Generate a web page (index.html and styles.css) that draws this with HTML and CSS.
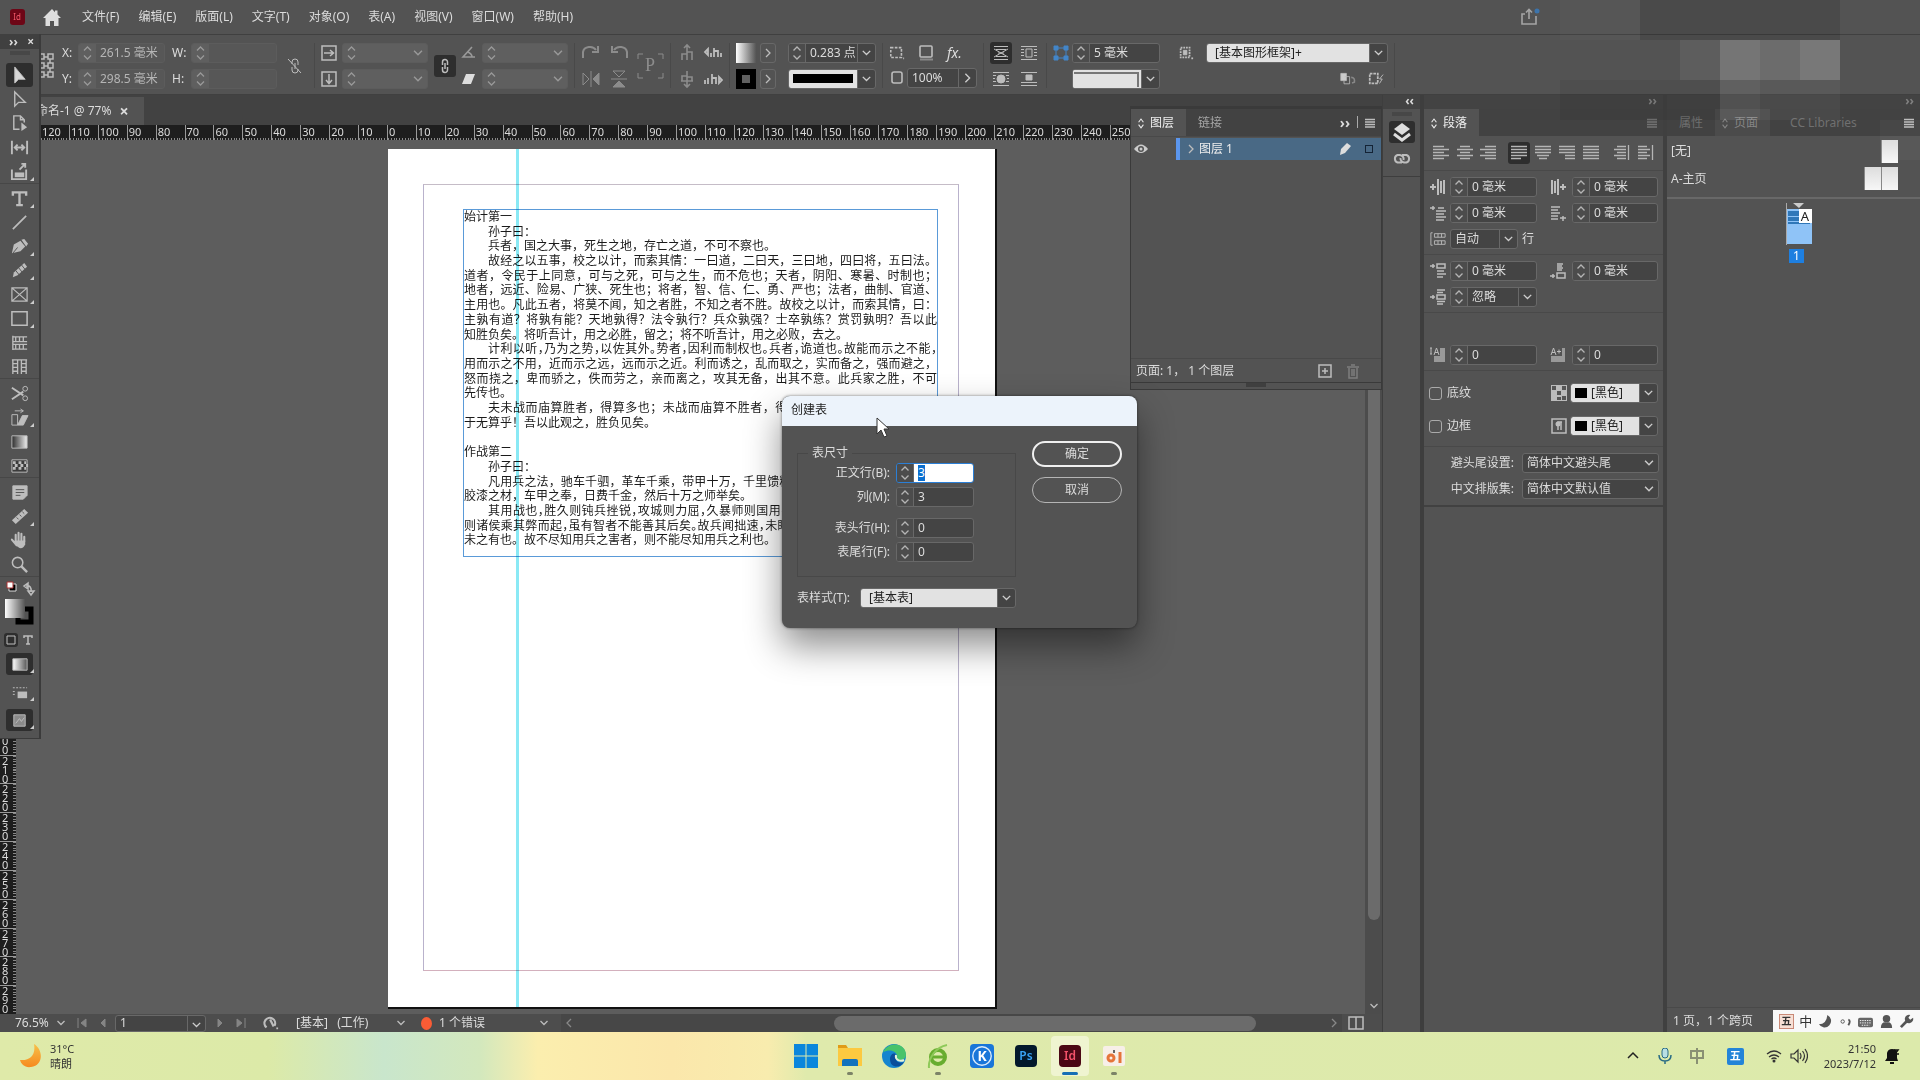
FILE: index.html
```html
<!DOCTYPE html>
<html lang="zh-CN">

<head>
  <meta charset="UTF-8">
  <meta name="viewport" content="width=device-width, initial-scale=1.0">
  <title>未命名-1 @ 77%</title>
  <link rel="stylesheet" href="styles.css">
</head>

<body>
  <!-- shared icons -->
  <svg class="sprite" aria-hidden="true">
    <symbol id="spin" viewBox="0 0 16 18"><path d="M4.500 6.500L8 3l3.500 3.500M4.500 11.500L8 15l3.500-3.500" /></symbol>
    <symbol id="down" viewBox="0 0 16 16"><path d="M4.500 6L8 9.500 11.500 6" /></symbol>
    <symbol id="right" viewBox="0 0 16 16"><path d="M6 4l4 4-4 4" /></symbol>
    <symbol id="menu" viewBox="0 0 16 16"><path d="M3 4.500h10M3 7h10M3 9.500h10M3 12h10" /></symbol>
    <symbol id="updown" viewBox="0 0 10 14"><path d="M2 6l3-4 3 4M2 9l3 4 3-4" /></symbol>
    <symbol id="bars" viewBox="0 0 16 16"><path d="M1 1.500h14M1 4.500h14M1 7.500h14M1 10.500h14M1 13.500h14" /></symbol>
    <symbol id="al" viewBox="0 0 16 16"><path d="M0 1.500h11M0 4.500h16M0 7.500h11M0 10.500h16M0 13.500h11" /></symbol>
    <symbol id="ac" viewBox="0 0 16 16"><path d="M3 1.500h10M0 4.500h16M3 7.500h10M0 10.500h16M3 13.500h10" /></symbol>
    <symbol id="ar" viewBox="0 0 16 16"><path d="M5 1.500h11M0 4.500h16M5 7.500h11M0 10.500h16M5 13.500h11" /></symbol>
    <symbol id="jl" viewBox="0 0 16 16"><path d="M0 1.500h16M0 4.500h16M0 7.500h16M0 10.500h16M0 13.500h10" /></symbol>
    <symbol id="jc" viewBox="0 0 16 16"><path d="M0 1.500h16M0 4.500h16M0 7.500h16M2 10.500h12M4 13.500h8" /></symbol>
    <symbol id="jr" viewBox="0 0 16 16"><path d="M0 1.500h16M0 4.500h16M0 7.500h16M6 10.500h10M6 13.500h10" /></symbol>
    <symbol id="ja" viewBox="0 0 16 16"><path d="M0 1.500h16M0 4.500h16M0 7.500h16M0 10.500h16M0 13.500h16" /></symbol>
    <symbol id="sp1" viewBox="0 0 16 16"><path d="M3 1.500h9M0 4.500h12M3 7.500h9M0 10.500h12M3 13.500h9M14.500 0v15" /></symbol>
    <symbol id="sp2" viewBox="0 0 16 16"><path d="M0 1.500h9M0 4.500h12M0 7.500h9M0 10.500h12M0 13.500h9M14.500 0v15" /></symbol>
  </svg>

  <header class="menubar">
    <svg class="app-logo" viewBox="0 0 15 16"><rect width="15" height="16" rx="3" fill="#6d0616" /><text x="7" y="11" text-anchor="middle" font-size="8" fill="#f55a6a">Id</text></svg>
    <svg class="home" viewBox="0 0 18 17"><path d="M9 0L0 9h2.500v8H7v-5h4v5h4.500V9H18l-3.500-3.500V1.500H12v1.700z" fill="#dedede" /></svg>
    <nav>
      <a href="#">文件(F)</a><a href="#">编辑(E)</a><a href="#">版面(L)</a><a href="#">文字(T)</a><a href="#">对象(O)</a><a href="#">表(A)</a><a href="#">视图(V)</a><a href="#">窗口(W)</a><a href="#">帮助(H)</a>
    </nav>
    <svg class="share" viewBox="0 0 20 18"><path d="M5 6H2v10h14V8M9 11V2M6 4.500L9 1.500l3 3" fill="none" stroke="#a5a5a5" stroke-width="1.600" /><circle cx="17" cy="3" r="2.500" fill="#3c74ac" /></svg>
  </header>

  <section class="controlbar">
    <div class="group first">
      <svg class="refgrid" viewBox="0 0 14 26"><g fill="none" stroke="#bbb" stroke-width="1.500"><path d="M0 1h4v5H0M8 1h5v5H8zM0 10h4v5H0M8 10h5v5H8zM0 19h4v5H0M8 19h5v5H8zM4 4h4M4 13h4M4 22h4M10 6v4M10 15v4" /></g></svg>
      <div class="xywh">
        <label for="fx">X:</label><span class="num off"><svg class="spin"><use href="#spin" /></svg><input id="fx" value="261.5 毫米"></span>
        <label for="fw">W:</label><span class="num off"><svg class="spin"><use href="#spin" /></svg><input id="fw"></span>
        <label for="fy">Y:</label><span class="num off"><svg class="spin"><use href="#spin" /></svg><input id="fy" value="298.5 毫米"></span>
        <label for="fh">H:</label><span class="num off"><svg class="spin"><use href="#spin" /></svg><input id="fh"></span>
      </div>
      <svg class="ico unlink" viewBox="0 0 16 16"><path d="M1 1l13 14M5 6V4a3 3 0 0 1 6 0v3M5 9v3a3 3 0 0 0 6 0v-1M8 5v6" /></svg>
    </div>

    <div class="group scale">
      <div class="pair">
        <svg class="ico" viewBox="0 0 16 16"><path d="M1 1h14v14H1zM3 8h9M9 5l3.500 3L9 11" stroke-width="1.500" /></svg>
        <span class="num off"><svg class="spin"><use href="#spin" /></svg><input aria-label="X 缩放"><svg class="caret"><use href="#down" /></svg></span>
        <svg class="ico" viewBox="0 0 16 16"><path d="M1 1h14v14H1zM8 3v9M5 9l3 3.500L11 9" stroke-width="1.500" /></svg>
        <span class="num off"><svg class="spin"><use href="#spin" /></svg><input aria-label="Y 缩放"><svg class="caret"><use href="#down" /></svg></span>
      </div>
      <button class="chain on" aria-label="约束缩放"><svg class="ico" viewBox="0 0 16 16"><path d="M5.500 7V4a2.500 2.500 0 0 1 5 0v3M5.500 9v3a2.500 2.500 0 0 0 5 0V9M8 5v6" stroke-width="1.500" /></svg></button>
      <div class="pair">
        <svg class="ico" viewBox="0 0 16 16"><path d="M11 2L2 12h12M7 7q4 2 4 5" stroke="#999" stroke-width="1.600" /></svg>
        <span class="num off"><svg class="spin"><use href="#spin" /></svg><input aria-label="旋转角度"><svg class="caret"><use href="#down" /></svg></span>
        <svg class="ico" viewBox="0 0 16 16"><path d="M5 3h9l-4 10H1z" fill="#ddd" stroke="none" /></svg>
        <span class="num off"><svg class="spin"><use href="#spin" /></svg><input aria-label="切变角度"><svg class="caret"><use href="#down" /></svg></span>
      </div>
    </div>

    <div class="group rotate dim">
      <div class="icons">
        <svg class="ico" viewBox="0 0 20 20"><path d="M2 15V9a7 6 0 0 1 13-2M17 3v6h-6" stroke-width="2" /></svg>
        <svg class="ico" viewBox="0 0 20 20"><path d="M18 15V9A7 6 0 0 0 5 7M3 3v6h6" stroke-width="2" /></svg>
        <svg class="ico" viewBox="0 0 20 20"><path d="M2 4v12l6-6zM10 2v16" /><path d="M18 4v12l-6-6z" fill="currentColor" /></svg>
        <svg class="ico" viewBox="0 0 20 20"><path d="M4 2h12l-6 6zM2 10h16" /><path d="M4 18h12l-6-6z" fill="currentColor" /></svg>
      </div>
      <svg class="pbox" viewBox="0 0 27 26"><path d="M1 6V1h5M21 1h5v5M1 20v5h5M21 25h5v-5" fill="none" stroke="currentColor" /><text x="13" y="18" text-anchor="middle" font-size="18" font-family="Liberation Serif, serif" fill="currentColor">P</text></svg>
    </div>

    <div class="group picks">
      <div class="icons">
        <svg class="ico dim" viewBox="0 0 20 20"><path d="M10 3v14M5 17v-6h5M15 17v-8h-5M7 5l3-3 3 3" stroke-width="1.600" /></svg>
        <svg class="ico" viewBox="0 0 20 20"><path d="M8 14v-4M11 14V5M11 8h4v6M18 14v-4M5 6L2 9l3 3z" stroke-width="1.800" /></svg>
        <svg class="ico dim" viewBox="0 0 20 20"><path d="M10 2v15M5 12V7h5M15 12V8h-5M4 12h12M7 15l3 3 3-3" stroke-width="1.600" /></svg>
        <svg class="ico" viewBox="0 0 20 20"><path d="M2 15v-4M5 15V9M9 15V5M9 9h4v6M16 8l3 3-3 3z" stroke-width="1.800" /></svg>
      </div>
    </div>

    <div class="group paint">
      <div class="swatches">
        <span class="fill"></span><button class="arrow" aria-label="填色"><svg class="ico"><use href="#right" /></svg></button>
        <span class="line"></span><button class="arrow" aria-label="描边"><svg class="ico"><use href="#right" /></svg></button>
      </div>
      <div class="stack">
        <span class="num"><svg class="spin"><use href="#spin" /></svg><input aria-label="描边粗细" value="0.283 点"><svg class="caret"><use href="#down" /></svg></span>
        <button class="style-pick" aria-label="描边类型"><span class="white"><i></i></span><svg class="caret"><use href="#down" /></svg></button>
      </div>
    </div>

    <div class="group effects">
      <div class="fxrow">
        <svg class="ico" viewBox="0 0 18 16"><path d="M2 2h12v11H2z" stroke-dasharray="3 1.500" stroke-width="1.800" /><path d="M16 14h1" stroke-width="2" /></svg>
        <svg class="ico" viewBox="0 0 16 16"><rect x="2" y="1" width="12" height="11" rx="1" stroke-width="1.600" /><path d="M2 14.500h13" stroke="#888" stroke-width="2" /></svg>
        <em>fx.</em>
      </div>
      <div class="oprow">
        <svg class="ico" viewBox="0 0 16 16"><rect x="3" y="2" width="10" height="11" rx="2" stroke-width="1.600" /></svg>
        <span class="num"><input aria-label="不透明度" value="100%"><svg class="caret"><use href="#right" /></svg></span>
      </div>
    </div>

    <div class="group wrap">
      <button class="on" aria-label="无文本绕排"><svg class="ico" viewBox="0 0 16 16"><path d="M1 1.500h14M1 14.500h14M3 4.500h10M5 8h6M3 11.500h10M1 4l14 8M15 4L1 12" /></svg></button>
      <button aria-label="沿定界框绕排"><svg class="ico" viewBox="0 0 16 16"><path d="M0 1.500h16M0 14.500h16M0 4.500h3M0 7.500h3M0 10.500h3M13 4.500h3M13 7.500h3M13 10.500h3M5 4h6v8H5z" /></svg></button>
      <button aria-label="沿对象形状绕排"><svg class="ico" viewBox="0 0 16 16"><path d="M0 1.500h16M0 14.500h16M0 4.500h3M0 7.500h2M0 10.500h3M13 4.500h3M14 7.500h2M13 10.500h3" /><circle cx="8" cy="8" r="4" fill="currentColor" /></svg></button>
      <button aria-label="上下型绕排"><svg class="ico" viewBox="0 0 16 16"><path d="M0 1.500h16M0 11.500h16M0 14.500h16" /><path d="M5 4h6v5H5z" fill="currentColor" /></svg></button>
    </div>

    <div class="group corner">
      <svg class="ico blue" viewBox="0 0 16 16"><path d="M3 3h10v10H3z" /><path d="M1 1h4v4H1zM11 1h4v4h-4zM1 11h4v4H1zM11 11h4v4h-4z" fill="#4385c8" /></svg>
      <div class="stack">
        <span class="num"><svg class="spin"><use href="#spin" /></svg><input aria-label="角大小" value="5 毫米"></span>
        <button class="style-pick" aria-label="角形状"><span class="white edge"></span><svg class="caret"><use href="#down" /></svg></button>
      </div>
    </div>

    <div class="group objstyle">
      <div class="objrow">
        <svg class="ico" viewBox="0 0 18 16"><path d="M3 2h10v11H3z" stroke-width="2" stroke-dasharray="2 1" /><path d="M6 5h4v5H6z" fill="currentColor" /><path d="M15 14h2" stroke-width="2" /></svg>
        <span class="combo light"><select aria-label="对象样式"><option>[基本图形框架]+</option></select><svg class="caret"><use href="#down" /></svg></span>
      </div>
      <div class="objrow end">
        <svg class="ico" viewBox="0 0 20 16"><path d="M1 1h7v9H1z" fill="#ccc" /><path d="M6 5h6v9H5v-4" /><path d="M14 6q5 0 4 6l-3 1" stroke="#888" stroke-width="2" /></svg>
        <svg class="ico" viewBox="0 0 18 16"><path d="M2 2h9v11H2z" stroke-width="2" stroke-dasharray="3 1" /><path d="M17 3l-4 5h3l-3 5" /></svg>
      </div>
    </div>
  </section>

  <main class="workspace">
    <section class="docarea">
      <div class="doctabs"><div class="doctab">未命名-1 @ 77% <button aria-label="关闭文档">×</button></div></div>
      <div class="hruler" id="hruler"></div>
      <div class="canvas">
        <div class="vruler" id="vruler"></div>
        <div class="pasteboard">
          <article class="page">
            <div class="margins"></div>
            <div class="frame">
              <p>始计第一</p>
              <p class="in">孙子曰：</p>
              <p class="in">兵者，国之大事，死生之地，存亡之道，不可不察也。</p>
              <p class="in full">故经之以五事，校之以计，而索其情：一曰道，二曰天，三曰地，四曰将，五曰法。</p>
              <p class="full">道者，令民于上同意，可与之死，可与之生，而不危也；天者，阴阳、寒暑、时制也；</p>
              <p class="full">地者，远近、险易、广狭、死生也；将者，智、信、仁、勇、严也；法者，曲制、官道、</p>
              <p class="full">主用也。凡此五者，将莫不闻，知之者胜，不知之者不胜。故校之以计，而索其情，曰：</p>
              <p class="full">主孰有道？将孰有能？天地孰得？法令孰行？兵众孰强？士卒孰练？赏罚孰明？吾以此</p>
              <p>知胜负矣。将听吾计，用之必胜，留之；将不听吾计，用之必败，去之。</p>
              <p class="in full tight">计利以听，乃为之势，以佐其外。势者，因利而制权也。兵者，诡道也。故能而示之不能，</p>
              <p class="full">用而示之不用，近而示之远，远而示之近。利而诱之，乱而取之，实而备之，强而避之，</p>
              <p class="full">怒而挠之，卑而骄之，佚而劳之，亲而离之，攻其无备，出其不意。此兵家之胜，不可</p>
              <p>先传也。</p>
              <p class="in full">夫未战而庙算胜者，得算多也；未战而庙算不胜者，得算少也。多算胜少算不胜，</p>
              <p>于无算乎！吾以此观之，胜负见矣。</p>
              <p></p>
              <p>作战第二</p>
              <p class="in">孙子曰：</p>
              <p class="in full">凡用兵之法，驰车千驷，革车千乘，带甲十万，千里馈粮，则内外之费，宾客之用，</p>
              <p>胶漆之材，车甲之奉，日费千金，然后十万之师举矣。</p>
              <p class="in full tight">其用战也，胜久则钝兵挫锐，攻城则力屈，久暴师则国用不足。夫钝兵挫锐，屈力殚货，</p>
              <p class="full tight">则诸侯乘其弊而起，虽有智者不能善其后矣。故兵闻拙速，未睹巧之久也。夫兵久而国利者，</p>
              <p>未之有也。故不尽知用兵之害者，则不能尽知用兵之利也。</p>
            </div>
            <div class="guide"></div>
          </article>
        </div>
        <div class="vscroll"><span></span><svg class="ico"><use href="#down" /></svg></div>
      </div>
      <footer class="status">
        <span class="zoom">76.5%</span><svg class="ico"><use href="#down" /></svg>
        <svg class="ico nav" viewBox="0 0 16 16"><path d="M4 3v10" /><path d="M12 4v8L7 8z" fill="currentColor" /></svg>
        <svg class="ico nav" viewBox="0 0 16 16"><path d="M10 4v8L6 8z" fill="currentColor" /></svg>
        <span class="num pageno"><input aria-label="页码" value="1"><svg class="caret"><use href="#down" /></svg></span>
        <svg class="ico nav" viewBox="0 0 16 16"><path d="M6 4v8l4-4z" fill="currentColor" /></svg>
        <svg class="ico nav" viewBox="0 0 16 16"><path d="M4 4v8l5-4z" fill="currentColor" /><path d="M12 3v10" /></svg>
        <svg class="ico preflight" viewBox="0 0 18 16"><path d="M4 13A6 6 0 1 1 13 11M8 4l4 8" stroke-width="2.500" /><path d="M15 14h2" stroke-width="2" /></svg>
        <span class="profile">[基本]&nbsp;&nbsp; (工作)</span><svg class="ico"><use href="#down" /></svg>
        <i class="reddot"></i><span class="errors">1 个错误</span><svg class="ico"><use href="#down" /></svg>
        <div class="hscroll"><svg class="ico"><use href="#right" /></svg><span></span><svg class="ico"><use href="#right" /></svg></div>
        <svg class="ico split" viewBox="0 0 16 16"><path d="M1 2h14v12H1zM8 2v12" stroke-width="1.500" /></svg>
      </footer>

      <!-- floating layers panel -->
      <aside class="layers">
        <div class="tabs"><button class="tab cur"><svg><use href="#updown" /></svg>图层</button><button class="tab">链接</button><span class="more">››</span><i class="bar"></i><svg class="ico"><use href="#menu" /></svg></div>
        <div class="layer">
          <svg class="ico eye" viewBox="0 0 16 16"><path d="M1 8q7-9 14 0-7 8-14 0z" fill="#ccc" stroke="none" /><circle cx="8" cy="8" r="3" fill="#535353" stroke="none" /><circle cx="8" cy="8" r="1.500" fill="#ccc" stroke="none" /></svg>
          <div class="layer-name"><svg class="ico"><use href="#right" /></svg>图层 1<svg class="ico pen" viewBox="0 0 16 16"><path d="M3 14l1-6 6-6 4 3-6 7z" fill="#ddd" stroke="none" /></svg><i></i></div>
        </div>
        <div class="layer-foot">页面: 1， 1 个图层
          <svg class="ico" viewBox="0 0 16 16"><path d="M2 2h12v12H2zM8 5v6M5 8h6" stroke-width="1.500" /></svg>
          <svg class="ico faint" viewBox="0 0 16 16"><path d="M2 4h12M6 2h4M4 5v10h8V5M7 6v7M9 6v7" stroke-width="1.500" /></svg>
        </div>
        <div class="grip"></div>
      </aside>
    </section>

    <section class="dock">
      <div class="strip">‹‹</div>
      <div class="dock-body">
        <i></i>
        <button class="on" aria-label="图层"><svg viewBox="0 0 20 20"><path d="M10 1l8 6-8 6-8-6z" fill="#ddd" /><path d="M2 12l8 6 8-6" fill="none" stroke="#ddd" stroke-width="3" /></svg></button>
        <button aria-label="链接"><svg viewBox="0 0 20 20"><path d="M10 13.500H5.500a4 4 0 0 1 0-7.500H8a4 4 0 0 1 3.500 5M10 6h4.500a4 4 0 0 1 0 7.500H12A4 4 0 0 1 8.500 9" fill="none" stroke="#bdbdbd" stroke-width="2" /></svg></button>
      </div>
    </section>

    <section class="para">
      <div class="strip"><span class="faint">››</span></div>
      <div class="tabs"><button class="tab cur"><svg><use href="#updown" /></svg>段落</button><svg class="ico menu faint"><use href="#menu" /></svg></div>
      <div class="aligns">
        <button aria-label="左对齐"><svg><use href="#al" /></svg></button><button aria-label="居中"><svg><use href="#ac" /></svg></button><button aria-label="右对齐"><svg><use href="#ar" /></svg></button>
        <button class="on" aria-label="双齐末行齐左"><svg><use href="#jl" /></svg></button><button aria-label="双齐末行居中"><svg><use href="#jc" /></svg></button><button aria-label="双齐末行齐右"><svg><use href="#jr" /></svg></button><button aria-label="全部强制双齐"><svg><use href="#ja" /></svg></button>
        <button class="gap" aria-label="朝向书脊"><svg><use href="#sp1" /></svg></button><button aria-label="背向书脊"><svg><use href="#sp2" /></svg></button>
      </div>
      <div class="fields">
        <svg class="ico" viewBox="0 0 16 16"><path d="M0 8h6M3 5v6M8 0v16M11 2v12M14 1v14" stroke-width="2" /></svg>
        <span class="num"><svg class="spin"><use href="#spin" /></svg><input aria-label="左缩进" value="0 毫米"></span>
        <svg class="ico" viewBox="0 0 16 16"><path d="M10 8h6M13 5v6M8 0v16M5 2v12M2 1v14" stroke-width="2" /></svg>
        <span class="num"><svg class="spin"><use href="#spin" /></svg><input aria-label="右缩进" value="0 毫米"></span>
        <svg class="ico" viewBox="0 0 16 16"><path d="M0 3h5M3 1v4M8 3h6M6 6h10M6 9h8M6 12h10M6 15h8" stroke-width="1.500" /></svg>
        <span class="num"><svg class="spin"><use href="#spin" /></svg><input aria-label="首行左缩进" value="0 毫米"></span>
        <svg class="ico" viewBox="0 0 16 16"><path d="M1 2h9M1 5h7M1 8h9M1 11h7M1 14h7M10 13h6M13 11v5" stroke-width="1.500" /></svg>
        <span class="num"><svg class="spin"><use href="#spin" /></svg><input aria-label="末行右缩进" value="0 毫米"></span>
        <svg class="ico" viewBox="0 0 18 16"><path d="M3 1H1v14h2M5 2h12v4H5zM5 10h12v4H5zM9 2v4M13 2v4M9 10v4M13 10v4" /></svg>
        <div class="auto"><span class="combo"><select id="gridrows"><option>自动</option></select><svg class="caret"><use href="#down" /></svg></span><label for="gridrows">行</label></div>
      </div>
      <div class="fields">
        <svg class="ico" viewBox="0 0 16 16"><path d="M0 3h5M3 1v4M7 1h8v4H7zM7 8h7M7 11h9M7 14h6" stroke-width="1.500" /></svg>
        <span class="num"><svg class="spin"><use href="#spin" /></svg><input aria-label="段前间距" value="0 毫米"></span>
        <svg class="ico" viewBox="0 0 16 16"><path d="M7 1h6M7 3h5M7 5h6M7 7h5M7 10h8v5H7zM0 13h5M3 11v4" stroke-width="1.500" /></svg>
        <span class="num"><svg class="spin"><use href="#spin" /></svg><input aria-label="段后间距" value="0 毫米"></span>
        <svg class="ico" viewBox="0 0 16 16"><path d="M0 8h5M3 6v4M7 1h8M7 3.500h6M7 6h8v4H7zM7 12.500h8M7 15h6" stroke-width="1.500" /></svg>
        <span class="num"><svg class="spin"><use href="#spin" /></svg><input aria-label="段落间距" value="忽略"><svg class="caret"><use href="#down" /></svg></span>
      </div>
      <div class="fields drop">
        <svg class="ico" viewBox="0 0 16 16"><path d="M1 1v6M0 1h2M0 7h2" /><path d="M10 1h5v14H4V9h6z" fill="#999" stroke="none" /><path d="M4 8l2.500-7L9 8M5 5.500h3" /></svg>
        <span class="num"><svg class="spin"><use href="#spin" /></svg><input aria-label="首字下沉行数" value="0"></span>
        <svg class="ico" viewBox="0 0 16 16"><path d="M12 1h3v14H1V9h11z" fill="#999" stroke="none" /><path d="M1 8l2.500-7L6 8M2 5.500h3M7 4.500h4M9 2.500v4" /></svg>
        <span class="num"><svg class="spin"><use href="#spin" /></svg><input aria-label="首字下沉字数" value="0"></span>
      </div>
      <div class="shade">
        <label><input type="checkbox">底纹</label>
        <svg class="ico" viewBox="0 0 16 16"><path d="M0 0h16v16H0z" fill="#bbb" stroke="none" /><path d="M1 1h4v4H1zM6 6h4v4H6zM11 1h4v4h-4zM11 11h4v4h-4zM6 12h4v3H6z" fill="#555" stroke="none" /></svg>
        <span class="combo light"><i></i><select aria-label="底纹颜色"><option>[黑色]</option></select><svg class="caret"><use href="#down" /></svg></span>
        <label><input type="checkbox">边框</label>
        <svg class="ico" viewBox="0 0 16 16"><path d="M1 1h14v14H1z" stroke-width="1.500" /><path d="M7 12V4h4M10 4v8" stroke-width="1.500" /><circle cx="7" cy="6" r="2.500" fill="currentColor" stroke="none" /></svg>
        <span class="combo light"><i></i><select aria-label="边框颜色"><option>[黑色]</option></select><svg class="caret"><use href="#down" /></svg></span>
      </div>
      <div class="sets">
        <label for="kinsoku">避头尾设置:</label><span class="combo"><select id="kinsoku"><option>简体中文避头尾</option></select><svg class="caret"><use href="#down" /></svg></span>
        <label for="mojikumi">中文排版集:</label><span class="combo"><select id="mojikumi"><option>简体中文默认值</option></select><svg class="caret"><use href="#down" /></svg></span>
      </div>
    </section>

    <section class="pages">
      <div class="strip"><span class="faint">››</span></div>
      <div class="tabs"><button class="tab">属性</button><button class="tab cur"><svg><use href="#updown" /></svg>页面</button><button class="tab">CC Libraries</button><svg class="ico menu"><use href="#menu" /></svg></div>
      <div class="master"><span>[无]</span><i class="sheet"></i></div>
      <div class="master second"><span>A-主页</span><i class="sheet"></i><i class="sheet"></i></div>
      <div class="spreads">
        <svg viewBox="0 0 26 42"><path d="M7 0h11l-5 5z" fill="#ccc" /><path d="M.500 0v42" stroke="#aaa" /><rect x="1" y="6" width="25" height="35" fill="#8fc3f7" /><path d="M2 8h11v5H2zM2 14h11v4H2zM2 19h22v2H2z" fill="#2f77b9" /><path d="M13 6h13v14H13z" fill="#fff" /><text x="19" y="18" text-anchor="middle" font-size="13" fill="#222">A</text></svg>
        <b>1</b>
      </div>
      <div class="pages-foot">1 页，1 个跨页</div>
      <div class="ime">
        <svg viewBox="0 0 16 16"><rect x=".500" y=".500" width="15" height="15" fill="#f7e0d6" stroke="#c78470" /><text x="8" y="12" text-anchor="middle" font-size="11" font-weight="700" fill="#333">五</text></svg>
        <span>中</span>
        <svg viewBox="0 0 16 16"><path d="M10 1a7 7 0 1 1-9 10q8 0 9-10z" fill="#555" /></svg>
        <svg viewBox="0 0 16 16"><circle cx="5" cy="8" r="1.800" fill="none" stroke="#555" /><path d="M11 6q3 1 0 6" fill="none" stroke="#555" stroke-width="2" /></svg>
        <svg viewBox="0 0 16 16"><rect y="4" width="16" height="10" rx="2" fill="#666" /><path d="M2 7h12M2 9.500h12M4 12h8" stroke="#fff" stroke-dasharray="1.500 1" /></svg>
        <svg viewBox="0 0 16 16"><circle cx="8" cy="5" r="4" fill="#555" /><path d="M2 15q0-7 6-6 6-1 6 6z" fill="#555" /></svg>
        <svg viewBox="0 0 16 16"><path d="M2 14l7-7" stroke="#555" stroke-width="3" /><path d="M15 4l-3 2-2-2 2-3a4.500 4.500 0 1 0 3 3z" fill="#555" /></svg>
      </div>
    </section>
  </main>

  <!-- floating toolbox -->
  <aside class="toolbox">
    <div class="tb-head"><span>››</span><button aria-label="关闭工具栏">×</button></div>
    <i class="tb-grip"></i>
    <div class="tools">
      <button class="on" aria-label="选择"><svg viewBox="0 0 20 20"><path d="M5 1v17l4-4h7z" fill="#d8d8d8" /></svg></button>
      <button aria-label="直接选择"><svg viewBox="0 0 20 20"><path d="M5 2v15l4-4h7z" stroke-width="1.500" /></svg></button>
      <button aria-label="页面"><svg viewBox="0 0 20 20"><path d="M10 16H4V2h7l4 4v3M11 2v4h4" stroke-width="1.500" /><path d="M12 9v9l6-4z" fill="#bdbdbd" stroke="none" /></svg></button>
      <button aria-label="间隙"><svg viewBox="0 0 20 20"><path d="M2 3v14M18 3v14M5 10h10M8 7l-3 3 3 3M12 7l3 3-3 3" stroke-width="2" /></svg></button>
      <button class="sub" aria-label="内容收集器"><svg viewBox="0 0 20 20"><path d="M2 8v10h15V8M10 8l6-6M12 2h4v4" stroke-width="2" /><path d="M5 11h10v5H5z" fill="#bdbdbd" stroke="none" /></svg></button>
    </div>
    <div class="tools">
      <button class="sub" aria-label="文字"><svg viewBox="0 0 20 20"><path d="M3 7V3.500h14V7M10 3v14M6.500 17h7" stroke-width="2.500" /></svg></button>
      <button aria-label="直线"><svg viewBox="0 0 20 20"><path d="M3 17L17 3" stroke-width="1.800" /></svg></button>
      <button class="sub" aria-label="钢笔"><svg viewBox="0 0 20 20"><path d="M2 17l2-9 7-4 5 6-5 5zM12 3l3-1 4 5-2 3z" fill="#bdbdbd" stroke="none" /><path d="M3 17l5-6" stroke="#535353" /></svg></button>
      <button class="sub" aria-label="铅笔"><svg viewBox="0 0 20 20"><path d="M3 17l1-5L15 2l3 4L8 15z" fill="#bdbdbd" stroke="none" /><path d="M6 10l4 5M9 7l4 5M12 4l4 5" stroke="#535353" /></svg></button>
      <button class="sub" aria-label="矩形框架"><svg viewBox="0 0 20 20"><path d="M2 3h16v14H2zM2 3l16 14M18 3L2 17" stroke-width="1.300" /></svg></button>
      <button class="sub" aria-label="矩形"><svg viewBox="0 0 20 20"><path d="M2 3h16v14H2z" stroke-width="1.600" /></svg></button>
      <button aria-label="水平网格"><svg viewBox="0 0 20 20"><path d="M3 3v15M3 4h15M3 9h15M3 12h15M3 17h15M6 4v5M10 4v5M14 4v5M6 12v5M10 12v5M14 12v5" stroke-width="1.400" /></svg></button>
      <button aria-label="垂直网格"><svg viewBox="0 0 20 20"><path d="M2 3h16M3 3v15M8 3v15M12 3v15M17 3v15M3 7h5M3 11h5M3 15h5M12 7h5M12 11h5M12 15h5" stroke-width="1.400" /></svg></button>
    </div>
    <div class="tools">
      <button aria-label="剪刀"><svg viewBox="0 0 20 20"><path d="M2 4l12 8M2 16l12-8" stroke-width="2" /><circle cx="16" cy="5" r="2.500" /><circle cx="16" cy="15" r="2.500" /></svg></button>
      <button class="sub" aria-label="自由变换"><svg viewBox="0 0 20 20"><path d="M2 7h6v11H2zM5 3h9M11 1l3 2-3 2" /><path d="M8 18l5-10h6l-5 10z" fill="#bdbdbd" /></svg></button>
      <button aria-label="渐变色板"><svg viewBox="0 0 20 20"><defs><linearGradient id="gr"><stop offset="0" stop-color="#2d2d2d" /><stop offset="1" stop-color="#eee" /></linearGradient></defs><path d="M2 4h16v13H2z" fill="url(#gr)" /></svg></button>
      <button aria-label="渐变羽化"><svg viewBox="0 0 20 20"><path d="M2 4h16v13H2z" fill="#3c3c3c" /><path d="M3 7h14M5 10h14M3 13h14" stroke-dasharray="3 3" stroke-width="3" /></svg></button>
    </div>
    <div class="tools">
      <button aria-label="附注"><svg viewBox="0 0 20 20"><path d="M3 3h15v10l-4 4H3z" fill="#bdbdbd" /><path d="M6 7h9M6 10h9M6 13h5" stroke="#535353" /></svg></button>
      <button class="sub" aria-label="度量"><svg viewBox="0 0 20 20"><path d="M2 14L15 2l4 4L6 18z" fill="#bdbdbd" stroke="none" /><path d="M7 11l2 2M10 8l2 2M13 5l2 2" stroke="#535353" /></svg></button>
      <button aria-label="抓手"><svg viewBox="0 0 20 20"><path d="M6 11V4M9 10V2M12 10V3M15 11V6M2 9l5 6" stroke-width="2.200" stroke-linecap="round" /><path d="M5 10h11v4q-2 5-6 4-3-1-5-5z" fill="#bdbdbd" stroke="none" /></svg></button>
      <button aria-label="缩放"><svg viewBox="0 0 20 20"><circle cx="8" cy="8" r="5.500" stroke-width="1.600" /><path d="M12 12l6 6" stroke-width="2.500" /></svg></button>
    </div>
    <div class="colors">
      <svg viewBox="0 0 40 54"><path d="M9 5h7v7H9z" fill="#000" stroke="#ddd" /><path d="M7 3h6v6H7z" fill="#fff" stroke="#a33" /><path d="M26 7q6-1 5 6M28 4l-4 3 4 3zM28 12h6l-3 4z" fill="none" stroke="#bdbdbd" stroke-width="1.500" /><path d="M18 30h13v13H18z" fill="none" stroke="#000" stroke-width="5" /><path d="M5 20h20v19H5z" fill="url(#gr2)" /><defs><linearGradient id="gr2"><stop offset="0" stop-color="#fff" /><stop offset="1" stop-color="#555" /></linearGradient></defs></svg>
      <div class="fmt"><button class="on" aria-label="格式针对容器"><svg viewBox="0 0 12 12"><path d="M2 2h8v8H2z" /></svg></button><button aria-label="格式针对文本"><svg viewBox="0 0 12 12"><path d="M2 4V2h8v2M6 2v8M4 10h4" stroke-width="1.500" /></svg></button></div>
      <button class="wide sub on" aria-label="应用渐变"><svg viewBox="0 0 20 20"><path d="M3 4h15v12H3z" fill="url(#gr2)" /></svg></button>
      <button class="wide sub" aria-label="视图选项"><svg viewBox="0 0 20 20"><path d="M8 9h10v7H8z" fill="#bdbdbd" stroke="none" /><path d="M3 5h15M3 9h2M3 12h2" stroke-dasharray="2 1.500" /></svg></button>
      <button class="wide sub on" aria-label="屏幕模式"><svg viewBox="0 0 20 20"><path d="M4 4h12v12H4z" fill="#8a8a8a" /><path d="M6 13l4-5 2 3 3-4" /></svg></button>
    </div>
  </aside>

  <!-- create table dialog -->
  <form class="dialog">
    <h1>创建表</h1>
    <div class="dialog-body">
      <div class="left">
        <fieldset>
          <legend>表尺寸</legend>
          <label for="rows">正文行(B):</label><span class="num active"><svg class="spin"><use href="#spin" /></svg><span class="inputwrap"><input id="rows" value="3"></span></span>
          <label for="cols">列(M):</label><span class="num"><svg class="spin"><use href="#spin" /></svg><input id="cols" value="3"></span>
          <label class="apart" for="head">表头行(H):</label><span class="num apart"><svg class="spin"><use href="#spin" /></svg><input id="head" value="0"></span>
          <label for="foot">表尾行(F):</label><span class="num"><svg class="spin"><use href="#spin" /></svg><input id="foot" value="0"></span>
        </fieldset>
        <div class="tstyle"><label for="tstyle">表样式(T):</label><span class="combo light"><select id="tstyle"><option>[基本表]</option></select><svg class="caret"><use href="#down" /></svg></span></div>
      </div>
      <div class="actions"><button type="button" class="ok">确定</button><button type="button">取消</button></div>
    </div>
    <svg class="cursor" viewBox="0 0 14 21"><path d="M1 1v16l4-4 3 7 3-1-3-7h5z" fill="#fff" stroke="#333" /></svg>
  </form>

  <!-- blurred-out corner -->
  <div class="mosaic"><i class="a"></i><i class="b"></i><i class="c"></i><i class="d"></i><i class="e"></i><i class="f"></i><i class="g"></i><i class="h"></i><i class="i"></i><i class="j"></i></div>

  <footer class="taskbar">
    <div class="weather">
      <svg viewBox="0 0 24 26"><defs><linearGradient id="mo" x2="0" y2="1"><stop offset="0" stop-color="#f7c04a" /><stop offset="1" stop-color="#f68a1e" /></linearGradient></defs><path d="M15 1c10 6 9 22-3 23C6 25 2 21 1 17c10 1 16-5 14-16z" fill="url(#mo)" /></svg>
      <p>31°C<br>晴朗</p>
    </div>
    <div class="apps">
      <button aria-label="开始"><svg viewBox="0 0 24 24"><path d="M0 0h11.500v11.500H0zM12.500 0H24v11.500H12.500zM0 12.500h11.500V24H0zM12.500 12.500H24V24H12.500z" fill="#0a86dc" /></svg></button>
      <button class="run" aria-label="文件资源管理器"><svg viewBox="0 0 24 24"><path d="M0 1h8l2 3v4H0z" fill="#e09b17" /><path d="M0 4h24v18H0z" fill="#fcc940" /><path d="M4 22v-5q0-2 2-2h12q2 0 2 2v5z" fill="#1271bd" /></svg></button>
      <button aria-label="Edge"><svg viewBox="0 0 24 24"><circle cx="12" cy="12" r="12" fill="#1685cf" /><path d="M1 8C6-3 24-2 24 11c0 5-7 6-9 4 2-7-6-11-14-7z" fill="#48c36b" /><path d="M8 15c0-5 5-7 6-4-2 7 4 9 8 7-4 7-14 6-14-3z" fill="#0b4e9b" /><path d="M14 11c-1 5 4 7 8 5" stroke="#e6f2d8" stroke-width="2" fill="none" /></svg></button>
      <button class="run" aria-label="浏览器"><svg viewBox="0 0 24 24"><circle cx="12" cy="13" r="7" fill="none" stroke="#68ad2f" stroke-width="4" /><path d="M6 13h13" stroke="#68ad2f" stroke-width="3" /><path d="M3 24C2 14 10 3 21 1" stroke="#8ec959" stroke-width="2" fill="none" /></svg></button>
      <button aria-label="K"><svg viewBox="0 0 26 26"><rect width="26" height="26" rx="4" fill="#1976d9" /><circle cx="13" cy="13" r="10" fill="none" stroke="#dcebfa" stroke-width="1.500" /><text x="13" y="18" text-anchor="middle" font-size="15" font-weight="700" fill="#fff">K</text></svg></button>
      <button aria-label="Photoshop"><svg viewBox="0 0 24 24"><rect x="1" y="1" width="22" height="22" rx="4" fill="#03192c" /><text x="12" y="16" text-anchor="middle" font-size="12" font-weight="600" fill="#39a3f5">Ps</text></svg></button>
      <button class="run cur" aria-label="InDesign"><svg viewBox="0 0 24 24"><rect x="1" y="1" width="22" height="22" rx="4" fill="#4b0815" /><text x="12" y="16" text-anchor="middle" font-size="12" font-weight="600" fill="#f4526a">Id</text></svg></button>
      <button class="run" aria-label="录屏"><svg viewBox="0 0 24 24"><rect x="1" y="2" width="22" height="20" rx="2" fill="#f7efe8" /><circle cx="9" cy="14" r="3" fill="none" stroke="#e5743a" stroke-width="3" /><path d="M18 8v11" stroke="#e5743a" stroke-width="3" /><path d="M12 6v3" stroke="#666" stroke-width="2" /></svg></button>
    </div>
    <div class="tray">
      <svg viewBox="0 0 16 16"><path d="M3 10l5-5 5 5" fill="none" stroke="#222" stroke-width="1.500" /></svg>
      <svg viewBox="0 0 16 16"><rect x="5" y="0" width="6" height="10" rx="3" fill="#b9dfe4" stroke="#286b85" /><path d="M2 7q0 6 6 6t6-6M8 13v3" fill="none" stroke="#286b85" stroke-width="1.500" /></svg>
      <svg viewBox="0 0 16 16"><path d="M2 3h12v7H2zM8 0v16" fill="none" stroke="#899073" stroke-width="2" /></svg>
      <b class="wubi">五</b>
      <svg viewBox="0 0 16 16"><path d="M1 6q7-6 14 0M3 9q5-4 10 0M5.500 11q2.500-2 5 0" fill="none" stroke="#333" stroke-width="1.300" /><circle cx="8" cy="13" r="1.500" fill="#333" /></svg>
      <svg class="vol" viewBox="0 0 18 16"><path d="M1 6v4h3l4 4V2L4 6zM10 5q2 3 0 6M12.500 3q4 5 0 10M15 1q5 7 0 14" fill="none" stroke="#333" stroke-width="1.200" /></svg>
      <p>21:50<br>2023/7/12</p>
      <svg viewBox="0 0 16 16"><path d="M1 13l2-3V5q1-4 5-4 5 0 5 4v5l1 3z" fill="#111" /><path d="M6 15h4" stroke="#111" stroke-width="2" /><path d="M10 2h4l-3 4h4" fill="none" stroke="#111" stroke-width="1.500" /></svg>
    </div>
  </footer>

  <script>
    // rulers: one cell per 10 mm, labels only where no panel covers them
    var h = document.getElementById('hruler');
    for (var i = -12; i < 34; i++) {
      var cell = document.createElement('span');
      if (i <= 25) cell.textContent = Math.abs(i * 10);
      h.appendChild(cell);
    }
    var v = document.getElementById('vruler');
    for (var j = 0; j < 30; j++) {
      var mark = document.createElement('span');
      if (j >= 20) mark.innerHTML = String(j * 10).split('').join('<br>');
      v.appendChild(mark);
    }
    document.getElementById('rows').select();
  </script>
</body>

</html>
```
FILE: styles.css
```css
* {
  box-sizing: border-box;
}

body {
  margin: 0;
  height: 100vh;
  display: flex;
  flex-direction: column;
  overflow: hidden;
  position: relative;
  background: #535353;
  color: #dcdcdc;
  font: 12px/16px "Noto Sans", "Noto Sans CJK SC", sans-serif;
}

.sprite {
  position: absolute;
  width: 0;
  height: 0;
}

symbol path {
  fill: none;
  stroke: currentColor;
  stroke-width: 1.3;
}

button, input, select {
  font: inherit;
  color: inherit;
  margin: 0;
  padding: 0;
  border: 0;
  background: none;
  min-width: 0;
}

button {
  display: flex;
  align-items: center;
  justify-content: center;
}

select {
  appearance: none;
}

a {
  color: inherit;
  text-decoration: none;
}

p {
  margin: 0;
}

.ico {
  width: 16px;
  height: 16px;
  flex: none;
  fill: none;
  stroke: currentColor;
  color: #bdbdbd;
}

.dim .ico, .ico.dim, .pbox {
  color: #8c8c8c;
}

.faint {
  opacity: 0.4;
}

.on {
  background: #2e2e2e;
  border-radius: 3px;
}

/* number boxes and drop-downs */
.num, .combo, .style-pick {
  display: flex;
  height: 20px;
  border: 1px solid #686868;
  border-radius: 3px;
  background: #444;
  overflow: hidden;
}

.num input, .combo select {
  flex: 1;
  width: 20px;
  padding-left: 4px;
  outline: none;
}

.spin {
  width: 17px;
  height: 18px;
  flex: none;
  background: #4c4c4c;
  border-right: 1px solid #686868;
  color: #b5b5b5;
}

.caret {
  width: 18px;
  height: 18px;
  flex: none;
  border-left: 1px solid #686868;
  color: #ccc;
}

.num.off {
  border-color: #5c5c5c;
  background: #575757;
  color: #b5b5b5;
}

.off .spin {
  background: #5f5f5f;
  border: 0;
  color: #999;
}

.off .caret {
  border: 0;
  color: #999;
}

.scale .num.off {
  background: #5f5f5f;
}

.combo.light select {
  background: #e2e2e2;
  color: #222;
}

/* menu bar */
.menubar {
  height: 35px;
  flex: none;
  display: flex;
  align-items: center;
  padding-left: 10px;
  border-bottom: 1px solid #404040;
}

.app-logo {
  width: 15px;
  height: 16px;
}

.home {
  width: 18px;
  height: 17px;
  margin: 0 21px 0 18px;
}

.menubar nav {
  display: flex;
  gap: 19px;
}

.share {
  width: 20px;
  height: 18px;
  margin: 0 380px 0 auto;
}

/* control bar */
.controlbar {
  height: 60px;
  flex: none;
  display: flex;
  padding: 8px 0 6px 40px;
  border-bottom: 1px solid #404040;
}

.group {
  display: flex;
  align-items: center;
  border-right: 1px solid #494949;
  padding: 0 6px;
}

.first {
  padding: 0 11px 0 0;
}

.refgrid {
  width: 14px;
  height: 26px;
}

.xywh {
  display: grid;
  grid-template-columns: 16px 87px 26px 86px;
  row-gap: 6px;
  margin: 0 10px 0 8px;
  align-items: center;
}

.xywh label:nth-of-type(even) {
  padding-left: 7px;
}

.pair {
  display: grid;
  grid-template-columns: 15px 86px;
  gap: 6px;
  align-items: center;
}

.chain {
  width: 22px;
  height: 22px;
  margin: 0 5px 0 6px;
}

.icons {
  display: grid;
  grid-template-columns: 20px 20px;
  gap: 6px 8px;
}

.icons .ico {
  width: 20px;
  height: 20px;
}

.picks .icons {
  column-gap: 6px;
}

.pbox {
  width: 27px;
  height: 26px;
  margin-left: 8px;
}

.swatches {
  display: grid;
  grid-template-columns: 20px 16px;
  gap: 6px 4px;
  margin-right: 12px;
}

.fill {
  background: linear-gradient(to right, #fff, #555);
}

.line {
  background: #606060;
  border: 6px solid #000;
}

.arrow {
  height: 20px;
  border: 1px solid #686868;
  border-radius: 3px;
}

.stack {
  display: flex;
  flex-direction: column;
  gap: 6px;
  width: 88px;
}

.white {
  flex: 1;
  height: 18px;
  background: #e2e2e2;
  display: flex;
  align-items: center;
  padding: 0 4px;
}

.white i {
  flex: 1;
  height: 9px;
  background: #000;
}

.white.edge {
  border: 1px solid #e2e2e2;
  box-shadow: inset -1px 1px #e2e2e2, inset -3px 3px #777;
}

.effects {
  width: 101px;
  flex-direction: column;
  align-items: stretch;
  justify-content: center;
  gap: 6px;
}

.fxrow, .oprow {
  display: flex;
  height: 20px;
  align-items: center;
  gap: 13px;
}

.oprow {
  gap: 2px;
}

.oprow .num {
  flex: 1;
}

.fxrow em {
  font-size: 14px;
}

.wrap {
  display: grid;
  grid-template-columns: 22px 22px;
  align-content: center;
  gap: 4px 6px;
}

.wrap button {
  height: 22px;
}

.corner {
  border: 0;
  gap: 3px;
}

.corner > .ico {
  align-self: flex-start;
  margin-top: 2px;
}

.ico.blue {
  color: #4385c8;
}

.objstyle {
  flex-direction: column;
  align-items: stretch;
  justify-content: center;
  gap: 6px;
  padding-left: 12px;
}

.objrow {
  display: flex;
  height: 20px;
  align-items: center;
  gap: 12px;
}

.objrow .combo {
  width: 182px;
}

.objrow.end {
  justify-content: flex-end;
  padding-right: 4px;
}

.objrow select {
  padding-left: 8px;
}

/* document window */
.workspace {
  flex: 1;
  min-height: 0;
  display: flex;
}

.docarea {
  flex: 1;
  min-width: 0;
  position: relative;
  display: flex;
  flex-direction: column;
  background: #424242;
}

.doctabs {
  height: 30px;
  padding-top: 2px;
  flex: none;
}

.doctab {
  width: 144px;
  height: 28px;
  padding-left: 24px;
  background: #535353;
  display: flex;
  align-items: center;
  gap: 8px;
  white-space: nowrap;
}

.doctab button {
  font-size: 16px;
  font-weight: 700;
}

.hruler {
  height: 15px;
  flex: none;
  display: grid;
  grid-template-columns: repeat(46, 1fr);
  padding: 0 12px 0 40px;
  background: #1e1e1e;
}

.hruler span {
  min-width: 0;
  border-left: 1px solid #9a9a9a;
  padding-left: 1px;
  font-size: 11px;
  line-height: 14px;
  background: repeating-linear-gradient(to right, #888 0 1px, transparent 1px 10%) bottom / 100% 2px no-repeat;
}

.canvas {
  flex: 1;
  min-height: 0;
  display: flex;
  background: #5d5d5d;
  overflow: hidden;
}

.vruler {
  width: 16px;
  padding-top: 9px;
  display: grid;
  grid-template-rows: repeat(30, 1fr);
  background: #1e1e1e;
}

.vruler span {
  min-height: 0;
  border-top: 1px solid #9a9a9a;
  padding-left: 2px;
  font-size: 11px;
  line-height: 9px;
  background: repeating-linear-gradient(to bottom, #888 0 1px, transparent 1px 10%) right / 3px 100% no-repeat;
}

.pasteboard {
  flex: 1;
  position: relative;
}

.page {
  position: absolute;
  left: 372px;
  top: 9px;
  width: 609px;
  height: 860px;
  background: #fff;
  border-right: 2px solid #111;
  border-bottom: 2px solid #111;
}

.margins {
  position: absolute;
  inset: 35px 36px 36px 35px;
  border: 1px solid #b9b2cc;
  border-top-color: #c5bcc7;
  border-bottom-color: #d3b0bd;
}

.guide {
  position: absolute;
  left: 128px;
  top: 0;
  bottom: 0;
  width: 3px;
  background: #8ae9f5;
  mix-blend-mode: multiply;
}

.frame {
  position: absolute;
  left: 75px;
  top: 60px;
  width: 475px;
  height: 348px;
  padding-bottom: 8px;
  border: 1px solid #5a9ad8;
  display: grid;
  grid-template-rows: repeat(23, 1fr);
  color: #1a1a1a;
  font-family: "Noto Sans CJK SC", sans-serif;
  line-height: 12px;
  white-space: nowrap;
}

.frame .in {
  padding-left: 24px;
}

.frame .full {
  text-align-last: justify;
}

.frame .tight {
  font-feature-settings: "halt";
}

.vscroll {
  width: 17px;
  background: #4c4c4c;
  display: flex;
  flex-direction: column;
  align-items: center;
  justify-content: space-between;
}

.vscroll span {
  width: 12px;
  height: 780px;
  border-radius: 6px;
  background: #6b6b6b;
}

.status {
  height: 18px;
  flex: none;
  display: flex;
  align-items: center;
  background: #4d4d4d;
  padding-left: 15px;
}

.status .nav {
  margin-left: 5px;
  color: #858585;
}

.zoom {
  width: 38px;
}

.status .pageno {
  width: 91px;
  height: 17px;
  margin: 0 1px 0 4px;
}

.preflight {
  margin: 0 17px 0 14px;
}

.profile {
  width: 97px;
}

.reddot {
  width: 11px;
  height: 13px;
  border-radius: 50%;
  background: #fb5c35;
  margin: 0 7px 0 12px;
}

.errors {
  width: 97px;
}

.hscroll {
  flex: 1;
  height: 18px;
  margin-left: 9px;
  display: flex;
  align-items: center;
  justify-content: space-between;
  background: #474747;
}

.hscroll .ico {
  color: #888;
}

.hscroll .ico:first-child {
  transform: scaleX(-1);
}

.hscroll span {
  width: 54%;
  height: 15px;
  margin-left: 24%;
  border-radius: 8px;
  background: #6b6b6b;
}

.status .split {
  margin: 0 18px 0 6px;
}

/* panel tabs */
.tabs {
  height: 27px;
  flex: none;
  display: flex;
  align-items: stretch;
  background: #424242;
}

.tab {
  padding: 0 12px;
  color: #a5a5a5;
}

.tab.cur {
  background: #535353;
  color: #eee;
  padding: 0 12px 0 6px;
  gap: 5px;
}

.tab svg {
  width: 8px;
  height: 12px;
}

.tabs > .ico {
  align-self: center;
}

.strip {
  height: 14px;
  flex: none;
  background: #434343;
  padding-right: 6px;
  text-align: right;
  font-size: 12px;
  font-weight: 700;
  line-height: 12px;
}

/* layers */
.layers {
  position: absolute;
  top: 11px;
  right: 0;
  width: 252px;
  height: 284px;
  border: 1px solid #3a3a3a;
  border-top-width: 3px;
  background: #535353;
  display: flex;
  flex-direction: column;
}

.more {
  margin-left: auto;
  align-self: center;
  font-size: 14px;
  font-weight: 700;
}

.bar {
  width: 1px;
  height: 12px;
  margin: 7px 4px 0 7px;
  background: #aaa;
}

.layers .tabs > .ico {
  margin-right: 3px;
}

.layer {
  height: 24px;
  display: flex;
  align-items: center;
  border-top: 1px solid #494949;
}

.eye {
  margin: 0 27px 0 2px;
}

.layer-name {
  flex: 1;
  height: 22px;
  display: flex;
  align-items: center;
  padding-right: 8px;
  border-left: 4px solid #5b96ee;
  background: #496985;
  color: #eee;
}

.layer-name .ico:first-child {
  margin-left: 3px;
}

.layer-name .pen {
  margin: 0 12px 0 auto;
}

.layer-name i {
  width: 8px;
  height: 8px;
  border: 1px solid #142335;
}

.layer-foot {
  margin-top: auto;
  height: 24px;
  display: flex;
  align-items: center;
  gap: 12px;
  padding: 0 20px 0 5px;
  border-top: 1px solid #494949;
}

.layer-foot .ico:first-of-type {
  margin-left: auto;
}

.grip {
  height: 7px;
  border-top: 1px solid #3a3a3a;
  background: linear-gradient(#3f3f3f, #3f3f3f) center top / 20px 4px no-repeat;
}

/* icon dock */
.dock {
  width: 42px;
  border: solid #3e3e3e;
  border-width: 0 4px 0 1px;
}

.dock-body {
  height: 68px;
  padding-top: 3px;
  border-bottom: 1px solid #3e3e3e;
  display: flex;
  flex-direction: column;
  align-items: center;
}

.dock-body i, .tb-grip {
  width: 20px;
  height: 4px;
  background: #474747;
}

.dock-body button {
  width: 26px;
  height: 22px;
  margin-top: 5px;
}

.dock-body svg {
  width: 20px;
  height: 20px;
}

/* paragraph panel */
.para {
  width: 243px;
  border-right: 4px solid #404040;
}

.para .menu, .pages .menu {
  margin: 0 3px 0 auto;
}

.aligns {
  display: flex;
  height: 35px;
  align-items: center;
  padding: 0 6px;
  gap: 2px;
  border-bottom: 1px solid #494949;
}

.aligns button {
  width: 22px;
  height: 22px;
}

.aligns .on {
  margin-left: 7px;
}

.aligns .gap {
  margin-left: 8px;
}

.aligns svg {
  width: 16px;
  height: 16px;
  color: #b5b5b5;
}

.fields {
  display: grid;
  grid-template-columns: 20px 100px 22px 86px;
  row-gap: 6px;
  align-items: center;
  padding: 6px 0 5px 6px;
  border-bottom: 1px solid #494949;
}

.fields > :nth-child(4n + 2) {
  width: 87px;
}

.auto {
  display: flex;
  align-items: center;
  gap: 4px;
}

.auto .combo {
  width: 68px;
  flex: none;
}

.drop {
  margin-top: 26px;
}

.shade {
  display: grid;
  grid-template-columns: 122px 19px 88px;
  row-gap: 13px;
  align-items: center;
  padding: 12px 0 10px 5px;
  border-bottom: 1px solid #494949;
}

.shade label {
  display: flex;
  align-items: center;
  gap: 5px;
}

.shade input {
  appearance: none;
  width: 13px;
  height: 13px;
  border: 1px solid #aaa;
  border-radius: 3px;
}

.shade .combo i {
  width: 20px;
  border: 4px solid #e2e2e2;
  background: #000;
}

.shade select {
  padding: 0;
}

.sets {
  display: grid;
  grid-template-columns: 1fr 137px;
  gap: 6px 8px;
  align-items: center;
  padding: 6px 4px 6px 0;
  border-bottom: 2px solid #414141;
}

.sets label {
  text-align: right;
}

.sets .caret {
  border: 0;
}

/* pages panel */
.pages {
  width: 253px;
  position: relative;
  display: flex;
  flex-direction: column;
}

.pages .tab {
  color: #707070;
}

.pages .tab:last-of-type {
  padding: 0 20px;
}

.pages .tab.cur {
  color: #868686;
  background: #4b4b4b;
}

.master {
  height: 30px;
  display: flex;
  align-items: center;
  padding: 0 22px 0 4px;
}

.master.second {
  height: 33px;
  padding-bottom: 6px;
  border-bottom: 2px solid #686868;
}

.master span {
  margin-right: auto;
}

.sheet {
  width: 17px;
  height: 23px;
  background: linear-gradient(#ddd, #f7f7f7);
  border-left: 1px solid #888;
}

.spreads {
  flex: 1;
  display: flex;
  flex-direction: column;
  align-items: center;
  padding: 4px 0 0 10px;
}

.spreads svg {
  width: 26px;
  height: 42px;
}

.spreads b {
  width: 15px;
  height: 14px;
  margin: 4px 4px 0 0;
  background: #1e7fe0;
  color: #fff;
  font-weight: 400;
  line-height: 14px;
  text-align: center;
}

.pages-foot {
  height: 25px;
  padding: 5px 6px;
  border-top: 1px solid #494949;
}

.ime {
  position: absolute;
  right: 0;
  bottom: 0;
  width: 147px;
  height: 22px;
  padding: 0 6px;
  display: flex;
  align-items: center;
  justify-content: space-between;
  background: #f8f8f8;
  color: #333;
  font-size: 13px;
}

.ime svg {
  width: 15px;
  height: 15px;
}

/* toolbox */
.toolbox {
  position: absolute;
  left: 0;
  top: 34px;
  width: 41px;
  height: 705px;
  display: flex;
  flex-direction: column;
  align-items: center;
  background: #535353;
  border-right: 2px solid #3b3b3b;
  border-bottom: 1px solid #3b3b3b;
}

.tb-head {
  width: 100%;
  height: 15px;
  flex: none;
  display: flex;
  justify-content: space-between;
  align-items: center;
  padding: 0 5px 0 9px;
  background: #404040;
  font-weight: 700;
}

.tb-grip {
  margin: 2px 0 8px;
}

.tools {
  width: 100%;
  padding: 0 6px;
  border-bottom: 1px solid #474747;
  margin-bottom: 2px;
}

.tools button, .wide {
  width: 27px;
  height: 24px;
  position: relative;
}

.tools svg, .wide svg {
  width: 19px;
  height: 19px;
}

.toolbox button svg {
  fill: none;
  stroke: #bdbdbd;
}

.sub::after {
  content: "";
  position: absolute;
  right: -1px;
  bottom: 2px;
  border: 2px solid;
  border-color: transparent #ccc #ccc transparent;
}

.colors {
  width: 100%;
  display: flex;
  flex-direction: column;
  align-items: center;
}

.colors > svg {
  width: 40px;
  height: 54px;
  flex: none;
}

.fmt {
  display: flex;
  gap: 3px;
  margin-bottom: 6px;
}

.fmt button {
  width: 14px;
  height: 14px;
}

.fmt svg {
  width: 12px;
  height: 12px;
}

.wide {
  height: 22px;
  margin-bottom: 6px;
}

/* dialog */
.dialog {
  position: absolute;
  left: 782px;
  top: 396px;
  width: 355px;
  border-radius: 8px;
  background: #535353;
  box-shadow: 0 18px 36px rgba(0, 0, 0, 0.45), 0 0 3px rgba(0, 0, 0, 0.5);
}

.dialog h1 {
  margin: 0;
  height: 30px;
  padding: 6px 9px;
  border-radius: 8px 8px 0 0;
  background: #ecf3fb;
  color: #222;
  font-size: 12px;
  font-weight: 400;
}

.dialog-body {
  display: flex;
  gap: 16px;
  padding: 15px 15px 20px;
}

.left {
  width: 219px;
  padding-top: 4px;
}

.dialog fieldset {
  margin: 0;
  height: 132px;
  min-width: 0;
  padding: 2px 41px 0 0;
  border: 1px solid #484848;
  display: grid;
  grid-template-columns: 1fr 78px;
  grid-auto-rows: min-content;
  gap: 4px 6px;
  align-items: center;
}

.dialog legend {
  margin-left: 10px;
  padding: 0 4px;
}

.dialog fieldset label {
  text-align: right;
}

.dialog .apart {
  margin-top: 7px;
}

.num.active {
  border-color: #2b7fd6;
}

.inputwrap {
  flex: 1;
  display: flex;
  background: #fff;
  color: #222;
}

.inputwrap input::selection {
  background: #0a6fd0;
  color: #fff;
}

.tstyle {
  display: flex;
  align-items: center;
  justify-content: space-between;
  margin-top: 11px;
}

.tstyle .combo {
  width: 156px;
}

.tstyle select {
  padding-left: 8px;
}

.actions {
  display: flex;
  flex-direction: column;
  gap: 10px;
}

.actions button {
  width: 90px;
  height: 26px;
  border: 1px solid #b5b5b5;
  border-radius: 13px;
}

.actions .ok {
  border: 2px solid #f0f0f0;
}

.cursor {
  position: absolute;
  left: 94px;
  top: 21px;
  width: 14px;
  height: 21px;
}

/* mosaic tiles */
.mosaic {
  position: absolute;
  top: 0;
  right: 0;
  display: grid;
  grid-template-columns: repeat(9, 40px);
  grid-template-rows: repeat(4, 40px);
  pointer-events: none;
}

.mosaic .a { grid-area: 1 / 1 / 2 / 3; background: rgba(255, 255, 255, 0.02); }
.mosaic .b { grid-area: 1 / 3 / 2 / 8; background: rgba(0, 0, 0, 0.1); }
.mosaic .c { grid-area: 2 / 4 / 3 / 5; background: rgba(255, 255, 255, 0.06); }
.mosaic .d { grid-area: 2 / 5 / 3 / 6; background: rgba(255, 255, 255, 0.2); }
.mosaic .e { grid-area: 2 / 6 / 3 / 7; background: rgba(255, 255, 255, 0.15); }
.mosaic .f { grid-area: 2 / 7 / 3 / 8; background: rgba(255, 255, 255, 0.22); }
.mosaic .g { grid-area: 3 / 1 / 4 / 5; background: rgba(0, 0, 0, 0.06); }
.mosaic .h { grid-area: 3 / 5 / 4 / 6; background: rgba(255, 255, 255, 0.08); }
.mosaic .i { grid-area: 3 / 6 / 4 / 8; background: rgba(255, 255, 255, 0.04); }
.mosaic .j { grid-area: 4 / 9 / 5 / 10; background: rgba(255, 255, 255, 0.03); }

/* taskbar */
.taskbar {
  height: 48px;
  flex: none;
  display: grid;
  grid-template-columns: 1fr auto 1fr;
  align-items: center;
  background: linear-gradient(to right, #dfeaa9 0, #dceaa8 14%, #c9e6cc 20%, #d3e8bd 25%, #fbeeae 28%, #fbe7ab 35%, #f8ecae 40%, #dfeaac 42%, #dceaab 100%);
  color: #333;
  line-height: 15px;
}

.weather {
  display: flex;
  align-items: center;
  gap: 7px;
  padding-left: 19px;
  font-size: 11px;
}

.weather svg {
  width: 24px;
  height: 26px;
}

.apps {
  display: flex;
}

.apps button {
  width: 38px;
  height: 40px;
  margin: 0 3px;
  border-radius: 4px;
  position: relative;
}

.apps svg {
  width: 24px;
  height: 24px;
}

.apps .cur {
  background: #eff4d0;
}

.run::after {
  content: "";
  position: absolute;
  left: 16px;
  bottom: 1px;
  width: 6px;
  height: 3px;
  border-radius: 2px;
  background: #7c8367;
}

.run.cur::after {
  left: 11px;
  width: 16px;
  background: #176fb5;
}

.tray {
  display: flex;
  align-items: center;
  justify-content: flex-end;
  gap: 16px;
  padding-right: 20px;
  font-size: 11px;
}

.tray svg {
  width: 16px;
  height: 16px;
}

.tray .vol {
  width: 18px;
  margin-left: -8px;
}

.tray p {
  text-align: right;
}

.tray p + svg {
  margin-left: -8px;
}

.wubi {
  width: 17px;
  height: 17px;
  margin: 0 6px;
  border-radius: 2px;
  background: #2384d8;
  color: #fff;
  line-height: 16px;
  text-align: center;
}
```
